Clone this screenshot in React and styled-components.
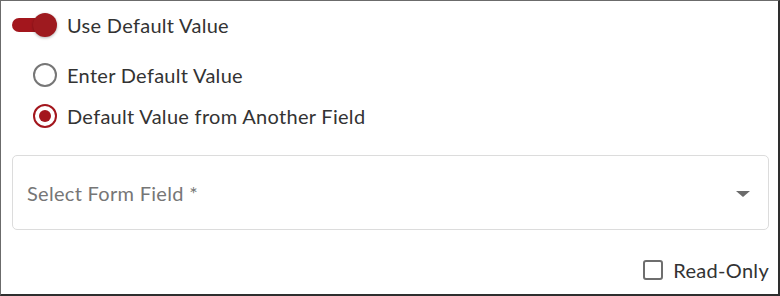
import React from "react";
import styled, { createGlobalStyle } from "styled-components";

const GlobalStyle = createGlobalStyle`
  html, body {
    margin: 0;
    padding: 0;
    background: #fff;
  }
  * {
    box-sizing: border-box;
  }
`;

const Panel = styled.div`
  width: 780px;
  height: 296px;
  border: 1px solid #6b6b6b;
  border-right: 2px solid #2e2e2e;
  border-bottom: 2px solid #2e2e2e;
  padding: 0 9px 0 11px;
  display: flex;
  flex-direction: column;
  font-family: "Lato", "Noto Sans", sans-serif;
  font-size: 20px;
  letter-spacing: 0.3px;
  color: #333;
`;

const ToggleRow = styled.label`
  height: 47px;
  display: flex;
  align-items: center;
  gap: 10px;
`;

const Track = styled.span`
  position: relative;
  width: 45px;
  height: 14px;
  display: flex;
  align-items: center;
`;

const TrackBar = styled.span`
  width: 39px;
  height: 14px;
  border-radius: 7px;
  background: ${(p) => (p.on ? "#a3161d" : "#bdbdbd")};
`;

const Thumb = styled.span`
  position: absolute;
  left: ${(p) => (p.on ? "21px" : "-4px")};
  top: -5px;
  width: 24px;
  height: 24px;
  border-radius: 50%;
  background: ${(p) => (p.on ? "#9e1a1f" : "#f5f5f5")};
  box-shadow: 0 1px 3px rgba(0, 0, 0, 0.3);
`;

const RadioGroup = styled.div`
  display: flex;
  flex-direction: column;
  padding-left: 21px;
  margin-top: 6px;
`;

const RadioRow = styled.label`
  height: 41px;
  display: flex;
  align-items: center;
  gap: 10px;
`;

const RadioCircle = styled.span`
  width: 24px;
  height: 24px;
  border-radius: 50%;
  border: 2.5px solid ${(p) => (p.checked ? "#a3161d" : "#767676")};
  display: flex;
  align-items: center;
  justify-content: center;
  &::after {
    content: "";
    width: 12px;
    height: 12px;
    border-radius: 50%;
    background: #a3161d;
    display: ${(p) => (p.checked ? "block" : "none")};
  }
`;

const SelectBox = styled.div`
  margin-top: 19px;
  height: 75px;
  border: 1px solid #dcdcdc;
  border-radius: 5px;
  display: flex;
  align-items: center;
  justify-content: space-between;
  padding: 0 18px 0 14px;
`;

const Placeholder = styled.span`
  color: #767676;
`;

const Arrow = styled.span`
  width: 0;
  height: 0;
  border-left: 7px solid transparent;
  border-right: 7px solid transparent;
  border-top: 6px solid #6b6b6b;
  margin-top: 2px;
`;

const Footer = styled.div`
  flex: 1;
  display: flex;
  justify-content: flex-end;
  align-items: center;
  padding-top: 16px;
`;

const CheckRow = styled.label`
  display: flex;
  align-items: center;
  gap: 10px;
`;

const CheckBox = styled.span`
  width: 20px;
  height: 20px;
  border: 2.5px solid #6e6e6e;
  border-radius: 3px;
`;

export default function App() {
  return (
    <>
      <GlobalStyle />
      <Panel>
        <ToggleRow>
          <Track>
            <TrackBar on />
            <Thumb on />
          </Track>
          <span>Use Default Value</span>
        </ToggleRow>
        <RadioGroup>
          <RadioRow>
            <RadioCircle />
            <span>Enter Default Value</span>
          </RadioRow>
          <RadioRow>
            <RadioCircle checked />
            <span>Default Value from Another Field</span>
          </RadioRow>
        </RadioGroup>
        <SelectBox>
          <Placeholder>Select Form Field *</Placeholder>
          <Arrow />
        </SelectBox>
        <Footer>
          <CheckRow>
            <CheckBox />
            <span>Read-Only</span>
          </CheckRow>
        </Footer>
      </Panel>
    </>
  );
}
